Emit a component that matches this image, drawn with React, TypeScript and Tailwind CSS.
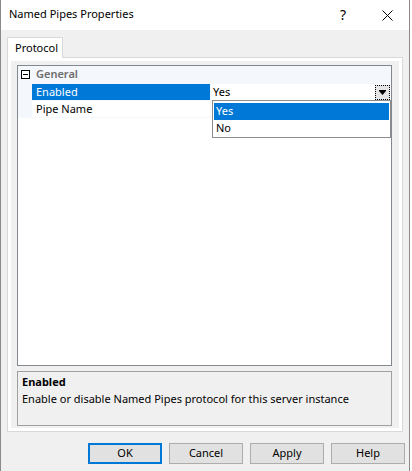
import React from "react";

const rows = [
    { name: "Enabled", value: "Yes", selected: true },
    { name: "Pipe Name", value: "", selected: false },
];

function DropButton() {
    return (
        <div className="ml-auto mr-[1px] w-[15px] h-[15px] bg-[#e5e5e5] border border-dotted border-black flex items-center justify-center">
            <svg width="7" height="5" viewBox="0 0 7 5">
                <rect x="0" y="0" width="7" height="1" fill="#000" />
                <polygon points="0,1 7,1 3.5,5" fill="#000" />
            </svg>
        </div>
    );
}

export default function App() {
    return (
        <div className="w-[412px] h-[471px] bg-white overflow-hidden font-['Noto_Sans',sans-serif] text-[11px] text-black">
            <div className="w-[410px] h-[471px] flex flex-col border-x border-[#8a8a8a]">
                {/* Title bar */}
                <div className="h-[30px] shrink-0 bg-white flex items-center pl-[8px]">
                    <span className="flex-1 pb-[1px]">Named Pipes Properties</span>
                    <span className="w-[44px] text-center text-[14px] pb-[2px]">?</span>
                    <span className="w-[44px] flex justify-center">
                        <svg width="11" height="11" viewBox="0 0 11 11">
                            <path d="M0.5 0.5 L10.5 10.5 M10.5 0.5 L0.5 10.5" stroke="#000" strokeWidth="1" />
                        </svg>
                    </span>
                </div>

                {/* Body */}
                <div className="flex-1 bg-[#f0f0f0] flex flex-col pt-[7px]">
                    <div className="ml-[6px] relative z-10 -mb-px w-[56px] h-[21px] bg-white border border-b-0 border-[#d9d9d9] pl-[7px] flex items-center">
                        Protocol
                    </div>
                    <div className="ml-[6px] w-[396px] h-[375px] border border-[#d9d9d9] bg-white p-[3px]">
                        <div className="h-full bg-[#f0f0f0] flex flex-col">
                            {/* Property grid */}
                            <div className="relative ml-[6px] mt-[4px] w-[375px] h-[301px] border border-[#828790] bg-white">
                                <div className="h-[17px] bg-[#f4f7fc] flex items-center">
                                    <div className="w-[14px] pl-[3px]">
                                        <div className="w-[9px] h-[9px] border border-black bg-white flex items-center justify-center">
                                            <div className="w-[5px] h-px bg-black" />
                                        </div>
                                    </div>
                                    <span className="pl-[4px] font-semibold text-[#6d6d6d]">General</span>
                                </div>
                                {rows.map((row) => (
                                    <div key={row.name} className="h-[17px] border-t border-[#f4f7fc] flex">
                                        <div className="w-[14px] bg-[#f4f7fc]" />
                                        <div
                                            className={
                                                row.selected
                                                    ? "w-[178px] pl-[4px] flex items-center bg-[#0078d7] text-white"
                                                    : "w-[178px] pl-[4px] flex items-center"
                                            }
                                        >
                                            {row.name}
                                        </div>
                                        <div className="w-px bg-[#f4f7fc]" />
                                        <div className="flex-1 pl-[2px] flex items-center">
                                            {row.value}
                                            {row.selected && <DropButton />}
                                        </div>
                                    </div>
                                ))}
                                <div className="h-px bg-[#f4f7fc]" />

                                {/* Open dropdown list */}
                                <div className="absolute left-[194px] top-[34px] w-[179px] h-[38px] bg-white border border-[#8c8c8c] pt-[2px] px-[1px]">
                                    <div className="h-[17px] bg-[#0078d7] text-white pl-[2px] flex items-center">Yes</div>
                                    <div className="h-[17px] pl-[2px] flex items-center">No</div>
                                </div>
                            </div>

                            {/* Description */}
                            <div className="ml-[6px] mt-[5px] w-[375px] h-[55px] border border-[#a0a0a0] px-[4px] pt-[1px] leading-[17px]">
                                <div className="font-bold">Enabled</div>
                                <div>Enable or disable Named Pipes protocol for this server instance</div>
                            </div>
                        </div>
                    </div>

                    {/* Buttons */}
                    <div className="mt-[11px] flex justify-end gap-[7px] pr-[4px]">
                        <button className="w-[74px] h-[21px] bg-[#e1e1e1] border-2 border-[#0078d7] flex items-center justify-center">
                            OK
                        </button>
                        {["Cancel", "Apply", "Help"].map((label) => (
                            <button
                                key={label}
                                className="w-[74px] h-[21px] bg-[#e1e1e1] border border-[#adadad] flex items-center justify-center"
                            >
                                {label}
                            </button>
                        ))}
                    </div>
                </div>
            </div>
        </div>
    );
}
